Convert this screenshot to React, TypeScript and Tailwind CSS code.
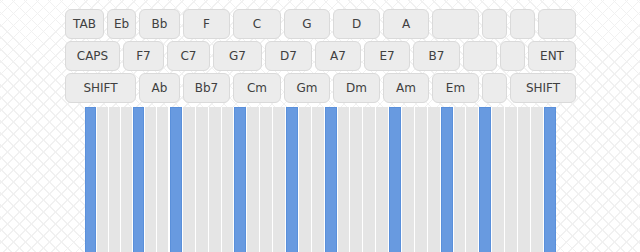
import React from "react";

type Key = { label: string; w: string };

// keyboard rows, widths read off the layout
const rows: Key[][] = [
  [
    { label: "TAB", w: "w-[39px]" },
    { label: "Eb", w: "w-[29px]" },
    { label: "Bb", w: "w-[41px]" },
    { label: "F", w: "w-[47px]" },
    { label: "C", w: "w-[48px]" },
    { label: "G", w: "w-[46px]" },
    { label: "D", w: "w-[47px]" },
    { label: "A", w: "w-[46px]" },
    { label: "", w: "w-[47px]" },
    { label: "", w: "w-[25px]" },
    { label: "", w: "w-[25px]" },
    { label: "", w: "w-[38px]" },
  ],
  [
    { label: "CAPS", w: "w-[55px]" },
    { label: "F7", w: "w-[41px]" },
    { label: "C7", w: "w-[43px]" },
    { label: "G7", w: "w-[49px]" },
    { label: "D7", w: "w-[47px]" },
    { label: "A7", w: "w-[46px]" },
    { label: "E7", w: "w-[46px]" },
    { label: "B7", w: "w-[47px]" },
    { label: "", w: "w-[34px]" },
    { label: "", w: "w-[25px]" },
    { label: "ENT", w: "w-[48px]" },
  ],
  [
    { label: "SHIFT", w: "w-[71px]" },
    { label: "Ab", w: "w-[41px]" },
    { label: "Bb7", w: "w-[47px]" },
    { label: "Cm", w: "w-[48px]" },
    { label: "Gm", w: "w-[46px]" },
    { label: "Dm", w: "w-[47px]" },
    { label: "Am", w: "w-[46px]" },
    { label: "Em", w: "w-[47px]" },
    { label: "", w: "w-[25px]" },
    { label: "SHIFT", w: "w-[66px]" },
  ],
];

// 37 strings, the lit ones are the current chord
const lit = [0, 4, 7, 12, 16, 19, 24, 28, 31, 36];
const strings = Array.from({ length: 37 }, (_, i) => i);

export default function App() {
  return (
    <div
      className="h-[252px] w-[640px] overflow-hidden bg-white bg-[repeating-linear-gradient(45deg,transparent_0_7.5px,#f1f1f1_7.5px_8.5px),repeating-linear-gradient(-45deg,transparent_0_7.5px,#f1f1f1_7.5px_8.5px)] pl-[65px] pt-[9px] text-[12px] text-[#404040]"
      style={{ fontFamily: '"DejaVu Sans", Verdana, sans-serif' }}
    >
      <div className="flex flex-col gap-[2px]">
        {rows.map((row, r) => (
          <div key={r} className="flex gap-[3px]">
            {row.map((k, i) => (
              <div
                key={i}
                className={`${k.w} flex h-[30px] items-center justify-center rounded-[6px] border border-[#dadada] bg-[#ececec]`}
              >
                {k.label}
              </div>
            ))}
          </div>
        ))}
      </div>

      {/* strings */}
      <div className="ml-[20px] mt-[4px] flex h-[160px] w-fit gap-px bg-white">
        {strings.map((i) => (
          <div
            key={i}
            className={`${i < 7 ? "w-[11px]" : "w-[11.9px]"} ${i === 7 ? "ml-px" : ""} h-full ${
              lit.includes(i)
                ? "border border-[#5a90db] bg-[#689ae0]"
                : "bg-[#e5e5e5]"
            }`}
          />
        ))}
      </div>
    </div>
  );
}
